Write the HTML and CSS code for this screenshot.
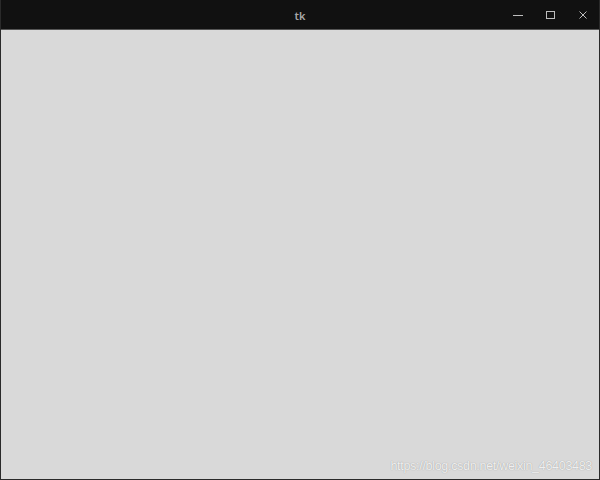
FILE: index.html
```html
<!DOCTYPE html>
<html>
<head>
<meta charset="utf-8">
<link rel="stylesheet" href="styles.css">
</head>
<body>
<div class="window">
  <div class="titlebar">
    <div class="title">tk</div>
    <div class="controls">
      <span class="ctl">
        <svg width="10" height="10" viewBox="0 0 10 10"><path d="M0 5.5H10" stroke="#bdbdbd" stroke-width="1"/></svg>
      </span>
      <span class="ctl">
        <svg width="10" height="10" viewBox="0 0 10 10"><rect x="1.5" y="1.5" width="8" height="7" fill="none" stroke="#bdbdbd" stroke-width="1"/></svg>
      </span>
      <span class="ctl">
        <svg width="10" height="10" viewBox="0 0 10 10"><path d="M1.5 1.5L8.5 8.5M8.5 1.5L1.5 8.5" stroke="#bdbdbd" stroke-width="1"/></svg>
      </span>
    </div>
  </div>
  <div class="content">
    <div class="watermark">https://blog.csdn.net/weixin_46403483</div>
  </div>
</div>
</body>
</html>
```
FILE: styles.css
```css
html, body {
  margin: 0;
  padding: 0;
  width: 600px;
  height: 480px;
  overflow: hidden;
  background: #1a1a1a;
}
.window {
  width: 600px;
  height: 480px;
  box-sizing: border-box;
  display: flex;
  flex-direction: column;
  background: #111111;
  border: 1px solid #2a2a2a;
  border-top: none;
}
.titlebar {
  height: 30px;
  flex: none;
  position: relative;
  background: #111111;
  display: flex;
  align-items: center;
  justify-content: center;
  border-bottom: 1px solid #555;
  box-sizing: border-box;
}
.title {
  color: #a8a8a8;
  font-family: "Noto Sans", "Open Sans", sans-serif;
  font-size: 11px;
  font-weight: 600;
  margin-top: 1px;
}
.controls {
  position: absolute;
  right: 0;
  top: 0;
  height: 29px;
  display: flex;
}
.ctl {
  width: 32px;
  height: 29px;
  display: flex;
  align-items: center;
  justify-content: center;
}
.ctl:last-child {
  width: 33px;
}
.content {
  flex: 1;
  background: #d9d9d9;
  display: flex;
  align-items: flex-end;
  justify-content: flex-end;
}
.watermark {
  font-family: "Liberation Sans", Arial, sans-serif;
  font-size: 12.5px;
  color: rgba(255, 255, 255, 0.85);
  text-shadow: 0 0 1px rgba(0, 0, 0, 0.35);
  margin: 0 7px 6px 0;
  letter-spacing: -0.3px;
}
```
